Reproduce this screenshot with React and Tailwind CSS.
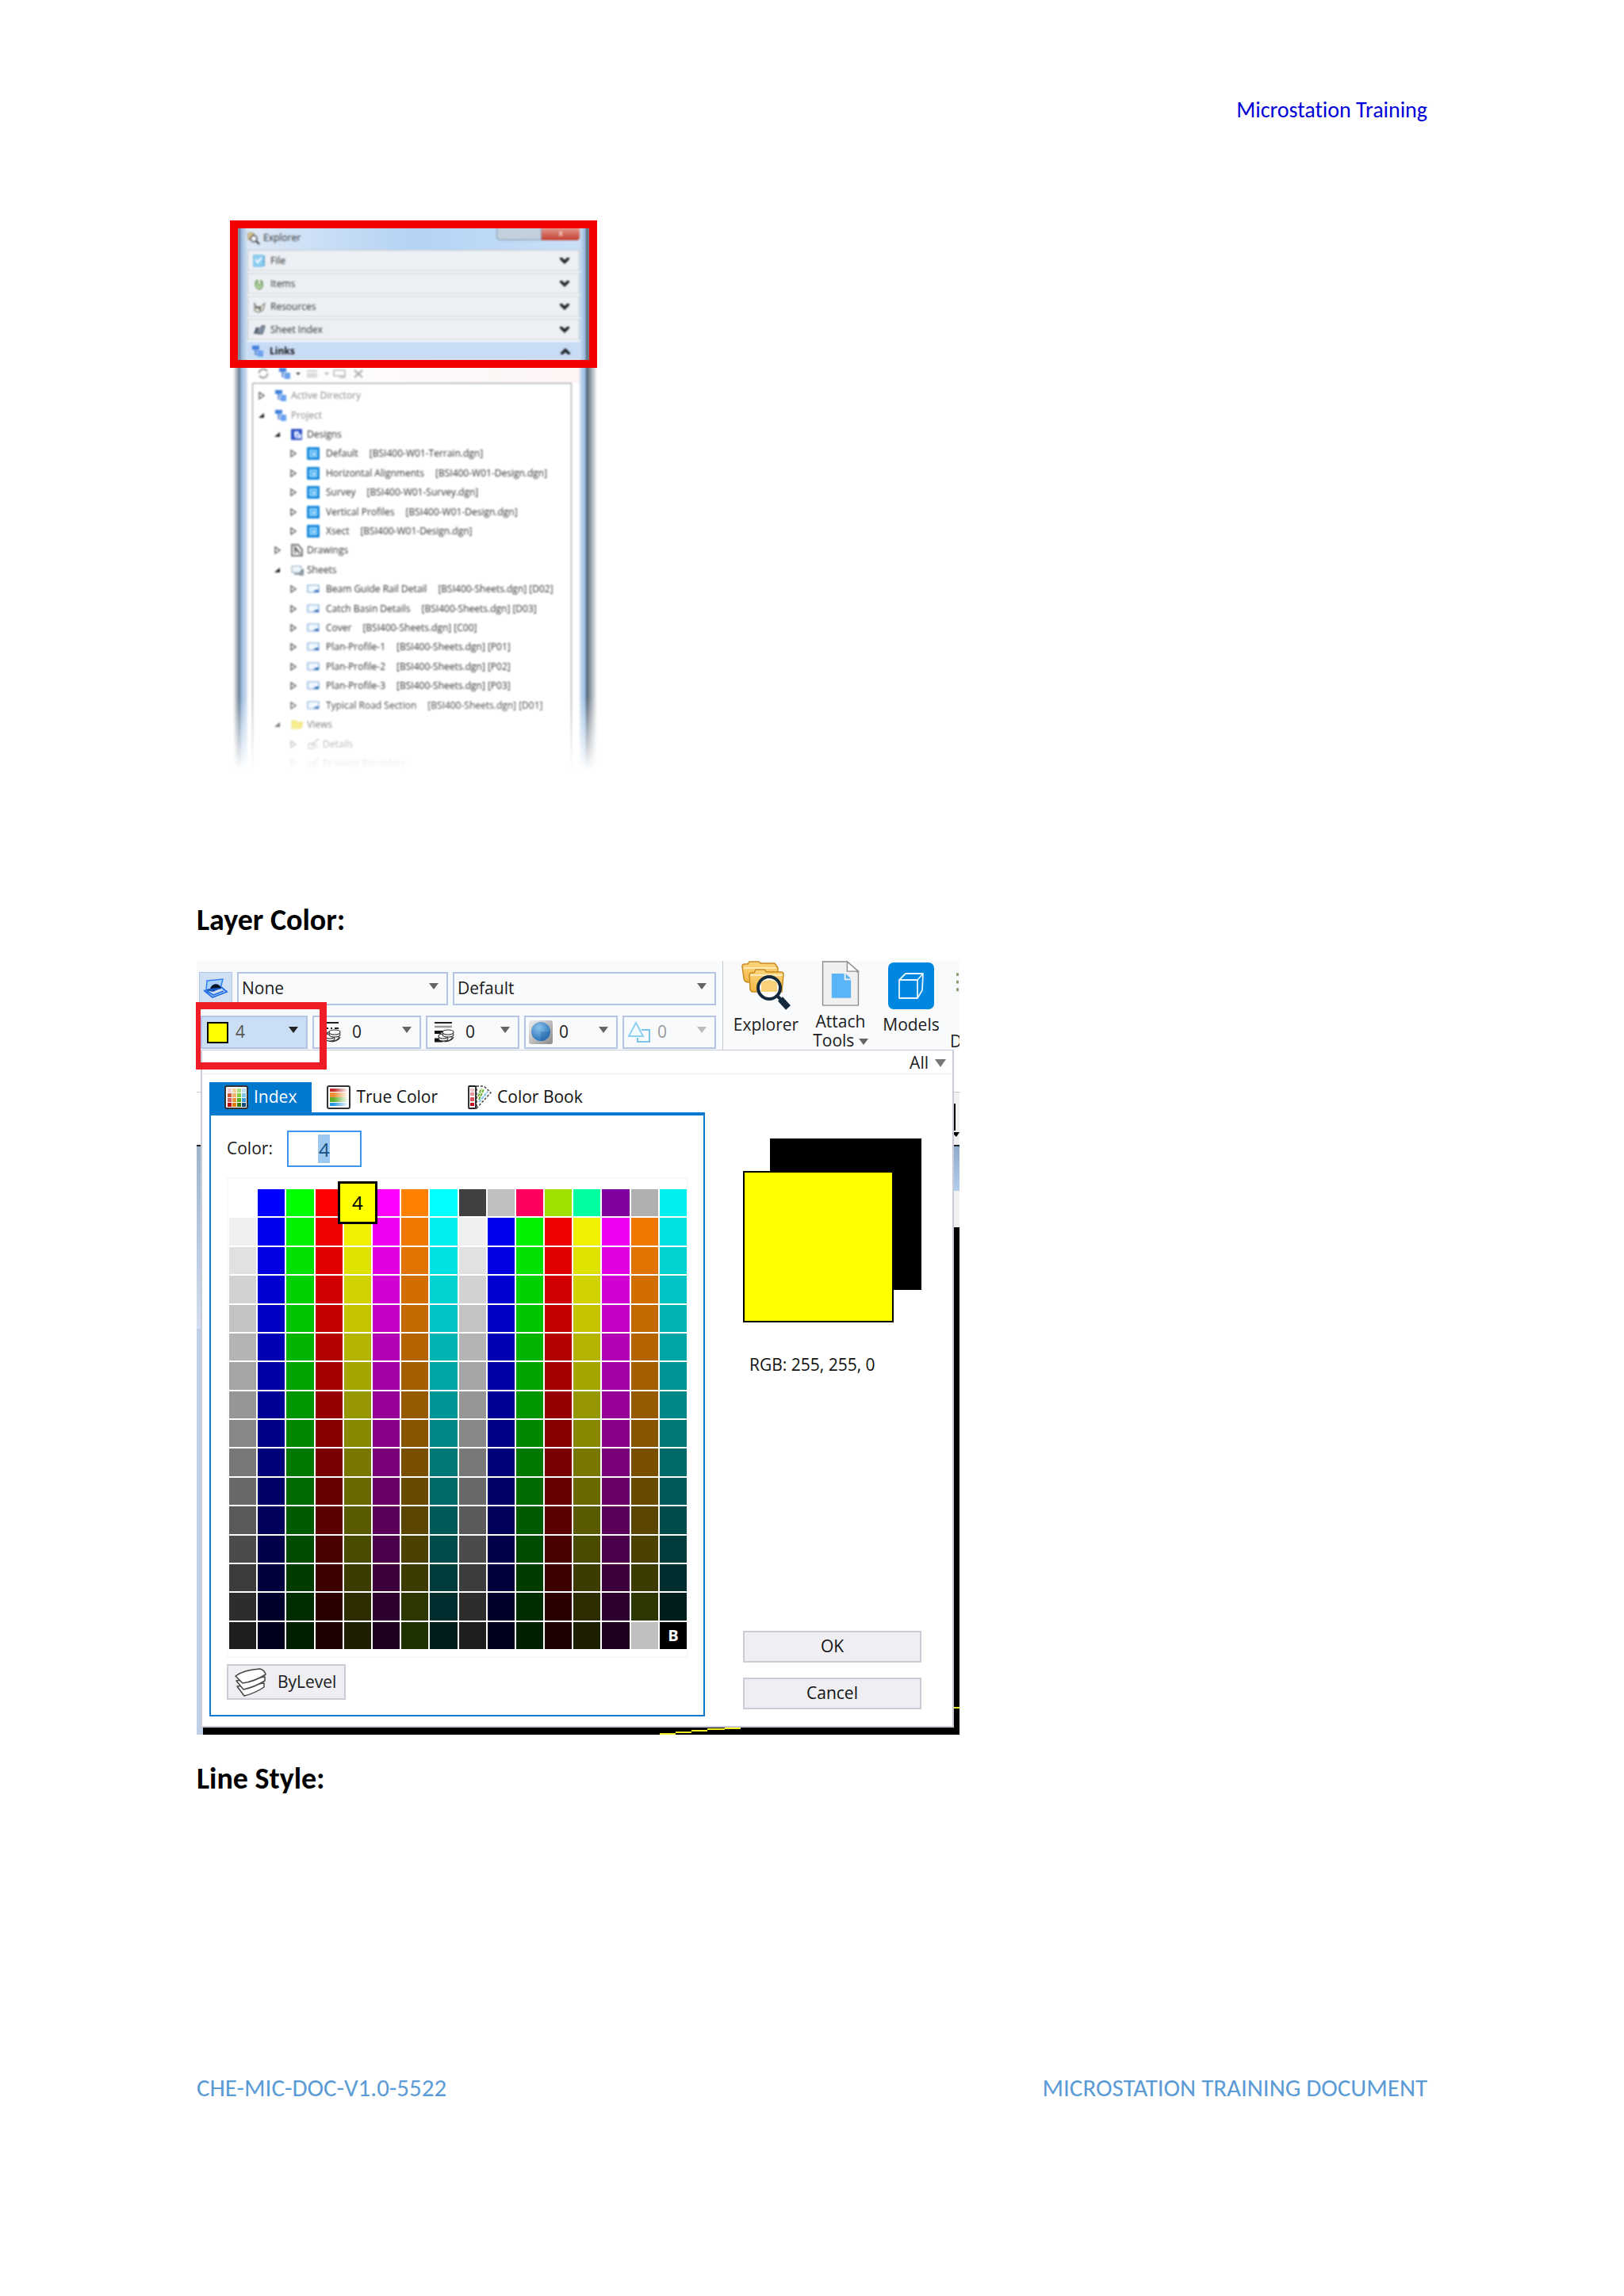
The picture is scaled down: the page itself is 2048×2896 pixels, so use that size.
import React from 'react';

// ─── Data ─────────────────────────────────────────────────────

const sections = [
  { name: 'File', icon: 'file' },
  { name: 'Items', icon: 'items' },
  { name: 'Resources', icon: 'resources' },
  { name: 'Sheet Index', icon: 'sheetIndex' },
];

const tree = [
  { level: 0, icon: 'link', name: 'Active Directory', muted: true },
  { level: 0, icon: 'link', name: 'Project', muted: true, open: true },
  { level: 1, icon: 'designs', name: 'Designs', open: true },
  { level: 2, icon: 'model', name: 'Default', file: '[BSI400-W01-Terrain.dgn]' },
  { level: 2, icon: 'model', name: 'Horizontal Alignments', file: '[BSI400-W01-Design.dgn]' },
  { level: 2, icon: 'model', name: 'Survey', file: '[BSI400-W01-Survey.dgn]' },
  { level: 2, icon: 'model', name: 'Vertical Profiles', file: '[BSI400-W01-Design.dgn]' },
  { level: 2, icon: 'model', name: 'Xsect', file: '[BSI400-W01-Design.dgn]' },
  { level: 1, icon: 'drawings', name: 'Drawings' },
  { level: 1, icon: 'sheets', name: 'Sheets', open: true },
  { level: 2, icon: 'sheet', name: 'Beam Guide Rail Detail', file: '[BSI400-Sheets.dgn] [D02]' },
  { level: 2, icon: 'sheet', name: 'Catch Basin Details', file: '[BSI400-Sheets.dgn] [D03]' },
  { level: 2, icon: 'sheet', name: 'Cover', file: '[BSI400-Sheets.dgn] [C00]' },
  { level: 2, icon: 'sheet', name: 'Plan-Profile-1', file: '[BSI400-Sheets.dgn] [P01]' },
  { level: 2, icon: 'sheet', name: 'Plan-Profile-2', file: '[BSI400-Sheets.dgn] [P02]' },
  { level: 2, icon: 'sheet', name: 'Plan-Profile-3', file: '[BSI400-Sheets.dgn] [P03]' },
  { level: 2, icon: 'sheet', name: 'Typical Road Section', file: '[BSI400-Sheets.dgn] [D01]' },
  { level: 1, icon: 'folder', name: 'Views', open: true },
  { level: 2, icon: 'details', name: 'Details' },
  { level: 2, icon: 'details', name: 'Drawing Boundary' },
];

const indents = ['pl-1.5', 'pl-[26px]', 'pl-[46px]'];

const firstRow = [
  '#ffffff', '#0000ff', '#00ff00', '#ff0000', '#ffff00', '#ff00ff', '#ff8000', '#00ffff',
  '#404040', '#c0c0c0', '#ff0060', '#a0e000', '#00ffa0', '#8000a0', '#b0b0b0', '#00f0f0',
];

// Every row below the first is 15 steps darker than the one above it
const shadeRow = (k) => {
  const v = 255 - 15 * k;
  const half = (cyan) => [
    `rgb(${v},${v},${v})`,
    `rgb(0,0,${v})`,
    `rgb(0,${v},0)`,
    `rgb(${v},0,0)`,
    `rgb(${v},${v},0)`,
    `rgb(${v},0,${v})`,
    `rgb(${v},${125 - 5 * k},0)`,
    `rgb(0,${cyan},${cyan})`,
  ];
  return [...half(v), ...half(v - 15)];
};

const palette = [...firstRow];
for (let k = 1; k < 16; k += 1) palette.push(...shadeRow(k));
palette[254] = '#c0c0c0';
palette[255] = '#000000';

// ─── Icons ────────────────────────────────────────────────────

const smallIcons = {
  file: (
    <>
      <rect x="0" y="1" width="12" height="14" fill="#8fd0f4" stroke="#5fb2e2" />
      <path d="M3 6l3 4 5-6" fill="none" stroke="#fff" strokeWidth="2" />
      <path d="M14 1v14" stroke="#6aaedb" strokeWidth="2" />
    </>
  ),
  items: (
    <>
      <path d="M4 4c-3 5 0 11 4 11s6-6 3-11z" fill="#a9cf96" stroke="#5c8a4c" />
      <path d="M6 3v5l2 2 2-2V3" fill="#eef6e8" stroke="#55764a" />
    </>
  ),
  resources: (
    <>
      <path d="M2 3v10l5 2 6-3 2-9-5 5H4z" fill="#e5e5da" stroke="#66665c" />
      <path d="M3 9h6v4" fill="none" stroke="#444" strokeWidth="1.5" />
    </>
  ),
  sheetIndex: (
    <>
      <path d="M1 13l3-8h4l-3 8z" fill="#4b5563" />
      <path d="M6 13l5-10h4l-3 10z" fill="#8594a8" stroke="#3a4350" />
    </>
  ),
  link: (
    <>
      <rect x="0" y="1" width="9" height="5" fill="#3f7fdc" />
      <path d="M4 6v6h4M4 8h4" fill="none" stroke="#4a7fd0" strokeWidth="1.5" />
      <rect x="7" y="7" width="7" height="8" fill="#6aa2ee" />
    </>
  ),
  designs: (
    <>
      <rect x="0" y="1" width="14" height="14" rx="1" fill="#2c50c4" />
      <path d="M4 4h6v3l3 1v5H6l-2-3z" fill="#dfe8ff" />
      <path d="M8 7v5" stroke="#2c50c4" />
    </>
  ),
  model: (
    <>
      <rect x="0" y="0" width="16" height="16" rx="1" fill="#1788dc" />
      <rect x="4" y="4" width="8" height="8" fill="#49aef2" stroke="#8fd3fb" strokeWidth="2" />
      <rect x="7" y="7" width="3" height="3" fill="#d5efff" />
    </>
  ),
  drawings: (
    <>
      <path d="M1 1h8l5 6v8H1z" fill="#f2f2f2" stroke="#555" strokeWidth="1.5" />
      <path d="M4 3l8 10M5 12V6l4 4" fill="none" stroke="#555" strokeWidth="1.3" />
    </>
  ),
  sheets: (
    <>
      <path d="M1 3h12v8H1z" fill="#eef6fb" stroke="#8aa6b8" />
      <path d="M4 13h7l4-5v6h-4" fill="none" stroke="#5c6f7d" strokeWidth="1.5" />
    </>
  ),
  sheet: (
    <>
      <path d="M1 3h14v9H1z" fill="#f2f9ff" stroke="#7ea8d6" strokeWidth="1.2" />
      <path d="M8 12l3-3h4v3z" fill="#3f74bd" />
    </>
  ),
  folder: <path d="M1 3h5l1 2h8l-2 8H1z" fill="#f3e34a" stroke="#dccb3c" />,
  details: (
    <>
      <path d="M2 7h7v6H2z" fill="none" stroke="#777" strokeWidth="1.3" />
      <path d="M6 10l7-8M12 2h3M11 8l3 4" fill="none" stroke="#777" strokeWidth="1.3" />
    </>
  ),
};

const SmallIcon = ({ name }) => (
  <svg viewBox="0 0 16 16" className="size-4 shrink-0" aria-hidden="true">
    {smallIcons[name]}
  </svg>
);

const Chevron = ({ up }) => (
  <svg viewBox="0 0 12 10" className={`w-3 h-2.5 ${up ? 'rotate-180' : ''}`} aria-hidden="true">
    <path d="M0 1h3l3 3 3-3h3v2L6 9 0 3z" fill="#1d2328" />
  </svg>
);

const Triangle = ({ className }) => (
  <svg viewBox="0 0 12 8" className={`w-3 h-2 shrink-0 pointer-events-none ${className}`} aria-hidden="true">
    <path d="M0 0h12L6 8z" fill="currentColor" />
  </svg>
);

const PlaneIcon = () => (
  <svg viewBox="0 0 32 26" className="w-8 h-[26px]" aria-hidden="true">
    <path d="M5 3L25 1l-3 12-18 2z" fill="#a9d0fb" stroke="#2f80f0" strokeWidth="1.5" />
    <path d="M1 15l11 9 18-7-7-6M5 16l8 5 13-5" fill="none" stroke="#1d6ce8" strokeWidth="1.8" />
    <path d="M9 13c2-7 11-8 14-1l-8 3z" fill="#06142b" />
    <path d="M2 15c7-3 14-3 21-3l-10 5z" fill="#1556c0" />
  </svg>
);

const Discs = () => (
  <g fill="#fff" stroke="#333" strokeWidth="1.2">
    <path d="M7 22c4 5 10 5 16 0v-8H9z" />
    <ellipse cx="12" cy="22" rx="6" ry="3" />
    <ellipse cx="12" cy="19" rx="6" ry="3" />
    <ellipse cx="18" cy="17" rx="7" ry="3" />
    <ellipse cx="18" cy="14" rx="7" ry="3" />
    <path d="M14 25c5 1 10-2 11-5" fill="none" />
  </g>
);

const LineStyleIcon = () => (
  <svg viewBox="0 0 28 28" className="size-7" aria-hidden="true">
    <path d="M2 2h21" stroke="#222" strokeWidth="2" />
    <path d="M2 9h21" stroke="#222" strokeWidth="2" strokeDasharray="8 3 2 3" />
    <path d="M1 17h5M1 23h4" stroke="#222" strokeWidth="2" />
    <Discs />
  </svg>
);

const LineWeightIcon = () => (
  <svg viewBox="0 0 28 28" className="size-7" aria-hidden="true">
    <path d="M1 2h22" stroke="#222" strokeWidth="2" />
    <path d="M1 7h22" stroke="#999" strokeWidth="2.5" />
    <path d="M1 14h12" stroke="#111" strokeWidth="4" />
    <path d="M1 24h10" stroke="#111" strokeWidth="5" />
    <Discs />
  </svg>
);

const SphereIcon = () => (
  <svg viewBox="0 0 30 30" className="size-[30px]" aria-hidden="true">
    <defs>
      <linearGradient id="plate" x1="0" y1="0" x2="1" y2="1">
        <stop offset="0" stopColor="#f0f0f0" />
        <stop offset="1" stopColor="#8a8a8a" />
      </linearGradient>
      <radialGradient id="ball" cx="0.4" cy="0.3" r="0.7">
        <stop offset="0" stopColor="#8cc4ee" />
        <stop offset="1" stopColor="#2c74b8" />
      </radialGradient>
    </defs>
    <rect width="30" height="30" rx="3" fill="url(#plate)" />
    <circle cx="15" cy="14" r="12" fill="url(#ball)" />
    <path d="M15 14v12a12 12 0 0 0 12-12z" fill="#1f5f9f" opacity="0.35" />
  </svg>
);

const PriorityIcon = () => (
  <svg viewBox="0 0 30 30" className="size-[30px]" aria-hidden="true">
    <path d="M18 12h10v15H13v-5" fill="none" stroke="#7cc5ef" strokeWidth="2" />
    <path d="M11 3l9 17H2z" fill="#f4fbff" stroke="#8ed0f3" strokeWidth="2" />
  </svg>
);

const ExplorerIcon = () => (
  <svg viewBox="0 0 62 62" className="size-[62px]" aria-hidden="true">
    <defs>
      <linearGradient id="folder" x1="0" y1="0" x2="0" y2="1">
        <stop offset="0" stopColor="#fbd67c" />
        <stop offset="1" stopColor="#f5b845" />
      </linearGradient>
    </defs>
    <path d="M1 7q0-3 3-3h4l2-3h12l2 2h18l4 6v18H9q-5 0-6-5z" fill="url(#folder)" stroke="#c98a22" strokeWidth="1.5" />
    <path d="M3 9h41" stroke="#fdeab8" strokeWidth="2" />
    <path d="M10 18q0-3 3-3h3l2-4h11l2 3h19q3 0 3 3l-2 22H14q-2 0-3-3z" fill="url(#folder)" stroke="#c98a22" strokeWidth="1.5" />
    <path d="M11 18h41" stroke="#fdeab8" strokeWidth="2" />
    <circle cx="35" cy="34" r="14" fill="#fff" stroke="#14293b" strokeWidth="4" />
    <path d="M25 27q10-6 20 0v12H25z" fill="#f9d27a" />
    <path d="M45 44l5 5" stroke="#14293b" strokeWidth="4" />
    <path d="M49 48l10 11" stroke="#14293b" strokeWidth="8" />
  </svg>
);

const AttachIcon = () => (
  <svg viewBox="0 0 50 62" className="w-[50px] h-[62px]" aria-hidden="true">
    <path d="M1 1h33l15 15v44H1z" fill="#f0f0f0" stroke="#8d8d8d" strokeWidth="1.5" />
    <path d="M34 1v13h15z" fill="#fff" stroke="#8d8d8d" strokeWidth="1.5" />
    <path d="M13 17h17v9h9v24H13z" fill="#58b5f7" />
    <path d="M32 17l7 7h-7z" fill="#58b5f7" />
  </svg>
);

const ModelsIcon = () => (
  <svg viewBox="0 0 60 62" className="w-[60px] h-[62px]" aria-hidden="true">
    <rect x="1" y="2" width="58" height="59" rx="7" fill="#0087e0" />
    <path d="M15 24h23v23H15zM15 24l8-8h22l-7 8M45 16l-1 21-6 10" fill="none" stroke="#e6f5ff" strokeWidth="1.8" strokeLinejoin="round" />
  </svg>
);

const swatchColumns = [
  ['#f2c9c9', '#d6553f', '#cf5f5f', '#c00000'],
  ['#f8cf98', '#f0b26a', '#eb9238', '#e07d00'],
  ['#a8dc7c', '#82cc40', '#5fae20', '#3c7a10'],
  ['#b9dff7', '#7dc3ee', '#3a9ee0', '#10507f'],
];

const IndexIcon = () => (
  <svg viewBox="0 0 30 30" className="size-[30px]" aria-hidden="true">
    <rect x="1" y="1" width="28" height="28" rx="2" fill="#fff" stroke="#333" strokeWidth="2" />
    {swatchColumns.map((column, x) =>
      column.map((fill, y) => (
        <rect key={fill} x={4 + x * 6} y={4 + y * 6} width="5" height="5" fill={fill} />
      ))
    )}
  </svg>
);

const TrueColorIcon = () => (
  <svg viewBox="0 0 30 30" className="size-[30px]" aria-hidden="true">
    <defs>
      <linearGradient id="fade" x1="0" y1="0" x2="1" y2="0">
        <stop offset="0.2" stopColor="#fff" stopOpacity="0" />
        <stop offset="1" stopColor="#fff" />
      </linearGradient>
    </defs>
    <rect x="1" y="1" width="28" height="28" rx="2" fill="#fff" stroke="#333" strokeWidth="2" />
    <rect x="4" y="4" width="22" height="4" fill="#c42c2c" />
    <rect x="4" y="9" width="22" height="6" fill="#ee8d34" />
    <rect x="4" y="15" width="22" height="6" fill="#62ae2c" />
    <rect x="4" y="22" width="22" height="4" fill="#2c96dc" />
    <rect x="4" y="4" width="23" height="22" fill="url(#fade)" />
  </svg>
);

const ColorBookIcon = () => (
  <svg viewBox="0 0 30 30" className="size-[30px]" aria-hidden="true">
    <path d="M11 1h9l9 8-18 20z" fill="#fff" stroke="#444" strokeWidth="1.5" strokeDasharray="3 2" />
    <path d="M13 14l4-10M14 18l6-13" stroke="#68b030" strokeWidth="2" strokeDasharray="4 1" />
    <path d="M14 21l11-13" stroke="#8cc8ee" strokeWidth="2.5" strokeDasharray="4 1" />
    <rect x="1" y="1" width="9" height="28" rx="1" fill="#fff" stroke="#222" strokeWidth="1.8" />
    <rect x="3" y="4" width="5" height="4" fill="#f0c4c8" />
    <rect x="3" y="9" width="5" height="4" fill="#e49098" />
    <rect x="3" y="15" width="5" height="5" fill="#d65460" />
    <rect x="3" y="22" width="5" height="4" fill="#c01020" />
  </svg>
);

const LevelsIcon = () => (
  <svg viewBox="0 0 42 36" className="w-[42px] h-9" aria-hidden="true">
    <g fill="#fff" stroke="#444" strokeWidth="1.5" strokeLinejoin="round">
      <path d="M3 23l9 12q13-3 25-11v-5z" />
      <path d="M2 16l9 11q14-3 27-11v-5z" />
      <path d="M1 10l9 9q15-2 29-11-1-5-7-7Q12 2 1 10z" />
    </g>
  </svg>
);

// ─── Explorer figure ──────────────────────────────────────────

const TreeRow = ({ item }) => (
  <li className={`flex flex-1 items-center ${indents[item.level]} ${item.muted ? 'text-[#8c8c8c]' : 'text-[#333]'}`}>
    <svg viewBox="0 0 10 10" className="size-2.5 mr-3 shrink-0" aria-hidden="true">
      {item.open ? (
        <path d="M8 2v6H1z" fill="#222" />
      ) : (
        <path d="M2 1v8l6-4z" fill="#fff" stroke="#666" strokeWidth="1.5" />
      )}
    </svg>
    <SmallIcon name={item.icon} />
    <span className={item.file ? 'ml-2' : 'ml-1'}>{item.name}</span>
    {item.file && <span className="ml-3.5">{item.file}</span>}
  </li>
);

const ExplorerFigure = () => (
  <figure className="relative ml-[42px] w-[463px] font-['Open_Sans',sans-serif] text-xs text-[#333]">
    <div className="flex h-[700px] blur-[1px] [mask-image:linear-gradient(#000_86%,transparent_99%)]">
      <div className="w-[13px] bg-linear-to-r from-transparent from-30% to-[#566b80]" />
      <div className="w-[9px] bg-linear-to-r from-[#8db0d6] to-[#d8e6f6]" />
      <div className="flex flex-1 flex-col whitespace-nowrap">
        <div className="flex h-[37px] items-start bg-linear-to-r from-[#dce8f5] via-[#b4d3f5] to-[#c9e0f8] pt-[9px]">
          <svg viewBox="0 0 16 16" className="size-4 mt-1.5" aria-hidden="true">
            <path d="M1 1h7v8H1z" fill="#e6cf92" stroke="#a08c56" />
            <circle cx="8" cy="8" r="4" fill="#f2f7fb" stroke="#444" strokeWidth="1.5" />
            <path d="M11 11l4 4" stroke="#333" strokeWidth="2" />
          </svg>
          <span className="ml-1 mt-[5px]">Explorer</span>
          <span className="ml-auto h-4 w-[57px] rounded-bl border border-t-0 border-[#8498ac] bg-[#c3d1de]" />
          <span className="flex h-4 w-12 justify-center rounded-br bg-linear-to-b from-[#e09a90] to-[#c43a2c] text-[10px]/[14px] text-white">x</span>
        </div>
        {sections.map((s) => (
          <button key={s.name} type="button" className="mb-0.5 flex h-[27px] items-center border border-[#c3c9d0] bg-[#eceff3] pr-3 pl-1.5">
            <SmallIcon name={s.icon} />
            <span className="ml-1.5">{s.name}</span>
            <span className="ml-auto"><Chevron /></span>
          </button>
        ))}
        <button type="button" className="flex h-[23px] items-center bg-[#c9dcf6] pr-3 pl-1.5 font-bold text-[#111]">
          <SmallIcon name="link" />
          <span className="ml-1.5">Links</span>
          <span className="ml-auto"><Chevron up /></span>
        </button>
        <div className="flex h-[29px] items-end gap-1.5 bg-linear-to-r from-white to-[#fdf4f4] pb-1 pl-3">
          <svg viewBox="0 0 138 16" className="h-4 w-[138px]" aria-hidden="true">
            <circle cx="8" cy="8" r="5.5" fill="none" stroke="#999" strokeWidth="2" strokeDasharray="14 3" />
            <g transform="translate(28 0)">{smallIcons.link}</g>
            <path d="M49 7h6l-3 3z" fill="#333" />
            <path d="M63 5h13M63 9h13M63 12h13" stroke="#bbb" strokeWidth="1.5" />
            <path d="M85 7h6l-3 3z" fill="#aaa" />
            <path d="M97 4h14v7H97zM104 13h8" fill="none" stroke="#bbb" strokeWidth="1.5" />
            <path d="M123 4l10 9M133 4l-10 9" stroke="#aaa" strokeWidth="2" />
          </svg>
        </div>
        <ul className="mr-2.5 ml-1.5 flex h-[492px] flex-col border border-b-0 border-[#8a8f96] bg-white pt-[3px]">
          {tree.map((item) => (
            <TreeRow key={item.name} item={item} />
          ))}
        </ul>
      </div>
      <div className="w-2 bg-linear-to-r from-[#cfe0f2] to-[#8db4dc]" />
      <div className="w-3.5 bg-linear-to-r from-[#4a5a6a] to-transparent" />
    </div>
    <div className="absolute inset-x-0 top-0 h-[186px] border-[10px] border-[#f40000]" />
  </figure>
);

// ─── Color picker figure ──────────────────────────────────────

const Combo = ({ label, value, icon, className, tone = 'text-[#666]' }) => (
  <div className={`relative flex items-center border-2 border-[#b4c4e4] ${className}`}>
    {icon && <span className="absolute left-1">{icon}</span>}
    <select aria-label={label} className={`h-full w-full appearance-none outline-none ${icon ? 'pl-[42px]' : 'pl-1'}`}>
      <option>{value}</option>
    </select>
    <Triangle className={`absolute top-3 right-2.5 ${tone}`} />
  </div>
);

const Ribbon = () => (
  <div className="flex h-28 overflow-hidden bg-[#f9fafb]">
    <div className="flex w-[655px] shrink-0 flex-col gap-[13px] pt-3.5">
      <div className="flex h-[42px] gap-1.5 pl-[3px]">
        <button type="button" aria-label="Active plane" className="flex w-[42px] items-center justify-center border border-[#b4c4e4] bg-[#cfe0f4]">
          <PlaneIcon />
        </button>
        <Combo label="Template" value="None" className="w-[266px]" />
        <Combo label="Level" value="Default" className="flex-1" />
      </div>
      <div className="flex h-[42px] gap-1.5 pl-[5px]">
        <Combo
          label="Color"
          value="4"
          className="w-[135px] bg-[#cadff5] text-[#555]"
          tone="text-[#222]"
          icon={<span className="ml-0.5 block size-[27px] border-2 border-black bg-[#ffff00]" />}
        />
        <Combo label="Line style" value="0" className="w-[137px] [&>select]:pl-[48px]" icon={<span className="block pl-1"><LineStyleIcon /></span>} />
        <Combo label="Line weight" value="0" className="w-[118px] [&>select]:pl-[48px]" icon={<span className="block pl-1"><LineWeightIcon /></span>} />
        <Combo label="Transparency" value="0" className="w-[118px]" icon={<SphereIcon />} />
        <Combo label="Priority" value="0" className="flex-1 text-[#999]" tone="text-[#bbb]" icon={<PriorityIcon />} />
      </div>
    </div>
    <div className="ml-2 flex min-w-0 flex-1 border-l border-[#c4c8d4] text-center leading-6">
      <button type="button" className="flex w-[108px] shrink-0 flex-col items-center justify-start gap-1.5">
        <ExplorerIcon />
        Explorer
      </button>
      <button type="button" className="flex w-20 shrink-0 flex-col items-center justify-start gap-1.5">
        <AttachIcon />
        <span className="whitespace-nowrap">
          Attach
          <br />
          Tools <Triangle className="inline text-[#666]" />
        </span>
      </button>
      <button type="button" className="flex w-[98px] shrink-0 flex-col items-center justify-start gap-1.5">
        <ModelsIcon />
        Models
      </button>
      <div className="flex min-w-0 flex-1 flex-col items-end overflow-hidden">
        <svg viewBox="0 0 6 62" className="h-[62px] w-1.5" aria-hidden="true">
          <path d="M2 18h4M2 28h4M2 38h4" stroke="#8a9a6a" strokeWidth="4" strokeDasharray="3 1" />
        </svg>
        <span className="mt-[30px] w-3 overflow-hidden text-left">D</span>
      </div>
    </div>
  </div>
);

const tabs = [
  { name: 'Index', icon: <IndexIcon />, active: true },
  { name: 'True Color', icon: <TrueColorIcon /> },
  { name: 'Color Book', icon: <ColorBookIcon /> },
];

const Palette = () => (
  <div className="grid h-[580px] w-[577px] grid-cols-16 grid-rows-16 gap-0.5">
    {palette.map((color, i) => (
      <button
        key={i}
        type="button"
        aria-label={`Color ${i}`}
        className="relative text-center text-xl/[34px] font-bold text-white"
        style={{ backgroundColor: color }}
      >
        {i === 4 && (
          <span className="absolute -inset-x-2 -inset-y-2.5 z-10 flex items-center justify-center border-[3px] border-black bg-[#ffff00] text-2xl font-medium text-black">
            4
          </span>
        )}
        {i === 255 && 'B'}
      </button>
    ))}
  </div>
);

const ColorPopup = () => (
  <div className="flex-1 border-2 border-t border-[#c9cbd8] bg-white">
    <div className="flex h-[30px] items-center justify-end gap-2 border-b border-[#ececf0] pt-0.5 pr-2">
      All
      <svg viewBox="0 0 14 10" className="h-2.5 w-3.5" aria-hidden="true">
        <path d="M0 0h14L7 10z" fill="#777" />
      </svg>
    </div>
    <div className="flex px-[9px] pt-2.5 pb-3">
      <div className="w-[625px]">
        <div className="flex h-[38px]" role="tablist">
          {tabs.map((t) => (
            <button
              key={t.name}
              type="button"
              role="tab"
              aria-selected={Boolean(t.active)}
              className={`flex items-center gap-[7px] px-[19px] ${t.active ? 'bg-[#0078d0] text-white' : 'text-[#111]'}`}
            >
              {t.icon}
              {t.name}
            </button>
          ))}
        </div>
        <div className="h-[762px] border-2 border-t-4 border-[#0a7ad0] px-5">
          <div className="flex items-center gap-[18px] pt-[19px]">
            <label htmlFor="color">Color:</label>
            <input
              id="color"
              defaultValue="4"
              className="h-[46px] w-[94px] border-2 border-[#3c96f0] bg-white bg-[linear-gradient(#9dc8ef,#9dc8ef)] bg-[length:15px_36px] bg-center bg-no-repeat text-center text-2xl text-[#16507f] outline-none"
            />
          </div>
          <div className="mt-[13px] flex h-[606px] justify-end border border-[#f4f4f4] pt-3.5">
            <Palette />
          </div>
          <button type="button" className="mt-2 flex h-[45px] w-[150px] items-center gap-3 border-2 border-[#ccccd4] bg-[#eeeef3] pl-2">
            <LevelsIcon />
            ByLevel
          </button>
        </div>
      </div>
      <div className="ml-12 flex w-[225px] flex-col pt-[71px] text-[#111]">
        <div className="relative h-[232px]">
          <div className="ml-auto h-[191px] w-[191px] bg-black" />
          <div className="absolute bottom-0 left-0 h-[191px] w-[190px] border-2 border-black bg-[#ffff00]" />
        </div>
        <p className="mt-[41px] pl-2 leading-6">RGB: 255, 255, 0</p>
        <button type="button" className="mt-auto h-10 border-2 border-[#ccccd4] bg-[#eeeef3]">OK</button>
        <button type="button" className="mt-[19px] mb-[9px] h-10 border-2 border-[#ccccd4] bg-[#eeeef3]">Cancel</button>
      </div>
    </div>
  </div>
);

const ColorFigure = () => (
  <figure className="relative mt-8 w-[962px] font-['Open_Sans',sans-serif] text-[21px] text-[#1b1b1b]">
    <Ribbon />
    <div className="flex">
      <div className="flex w-[5px] flex-col">
        <div className="h-[54px] border-b border-[#c8c8c8]" />
        <div className="h-[68px] border-b-2 border-[#222]" />
        <div className="h-[230px] bg-linear-to-b from-[#9db4cc] to-[#d3def0]" />
        <div className="flex-1 bg-[#bfd0e6]" />
      </div>
      <ColorPopup />
      <div className="flex w-[7px] flex-col">
        <div className="h-[54px] border-b border-[#c8c8c8]" />
        <div className="h-[68px] border-b-2 border-[#222] bg-[#f1f1f4] pt-3.5">
          <div className="h-[34px] border-l-2 border-black" />
          <svg viewBox="0 0 7 6" className="mt-0.5 h-1.5 w-[7px]" aria-hidden="true">
            <path d="M0 0h7L3 6 0 3z" fill="#000" />
          </svg>
        </div>
        <div className="h-14 bg-linear-to-b from-[#8fabcc] to-[#b3cdec]" />
        <div className="h-[46px] bg-[#f1f1f4]" />
        <div className="flex flex-1 flex-col justify-end bg-black pb-6">
          <div className="h-0.5 bg-[#e6e62c]" />
        </div>
      </div>
    </div>
    <div className="flex h-[9px] bg-black">
      <div className="w-2 bg-[#bfd0e6]" />
      <svg viewBox="0 0 110 9" className="ml-[576px] h-[9px] w-[110px]" aria-hidden="true">
        <path d="M0 8h20M20 6h20M40 4h20M60 2h22M82 1h20" stroke="#f2f22c" strokeWidth="2" />
      </svg>
    </div>
    {/* Highlight around the active color box */}
    <div className="pointer-events-none absolute -left-px top-[52px] h-[85px] w-[165px] border-[9px] border-l-[6px] border-[#ee1c24]" />
  </figure>
);

// ─── Page ─────────────────────────────────────────────────────

const App = () => {
  return (
    <div className="min-h-screen bg-white px-[248px] pt-[123px] font-['Carlito','Lato',sans-serif] text-black [font-variant-ligatures:none]">
      <header className="mb-[123px] text-right text-[28px]/8 text-[#0000d8]">Microstation Training</header>
      <main>
        <ExplorerFigure />
        <h2 className="mt-[162px] text-[38px]/10 font-bold">Layer Color:</h2>
        <ColorFigure />
        <h2 className="mt-[35px] text-[38px]/10 font-bold">Line Style:</h2>
      </main>
      <footer className="mt-[350px] flex justify-between text-[31px]/10 text-[#5b9bd5]">
        <span>CHE-MIC-DOC-V1.0-5522</span>
        <span>MICROSTATION TRAINING DOCUMENT</span>
      </footer>
    </div>
  );
};

export default App;
